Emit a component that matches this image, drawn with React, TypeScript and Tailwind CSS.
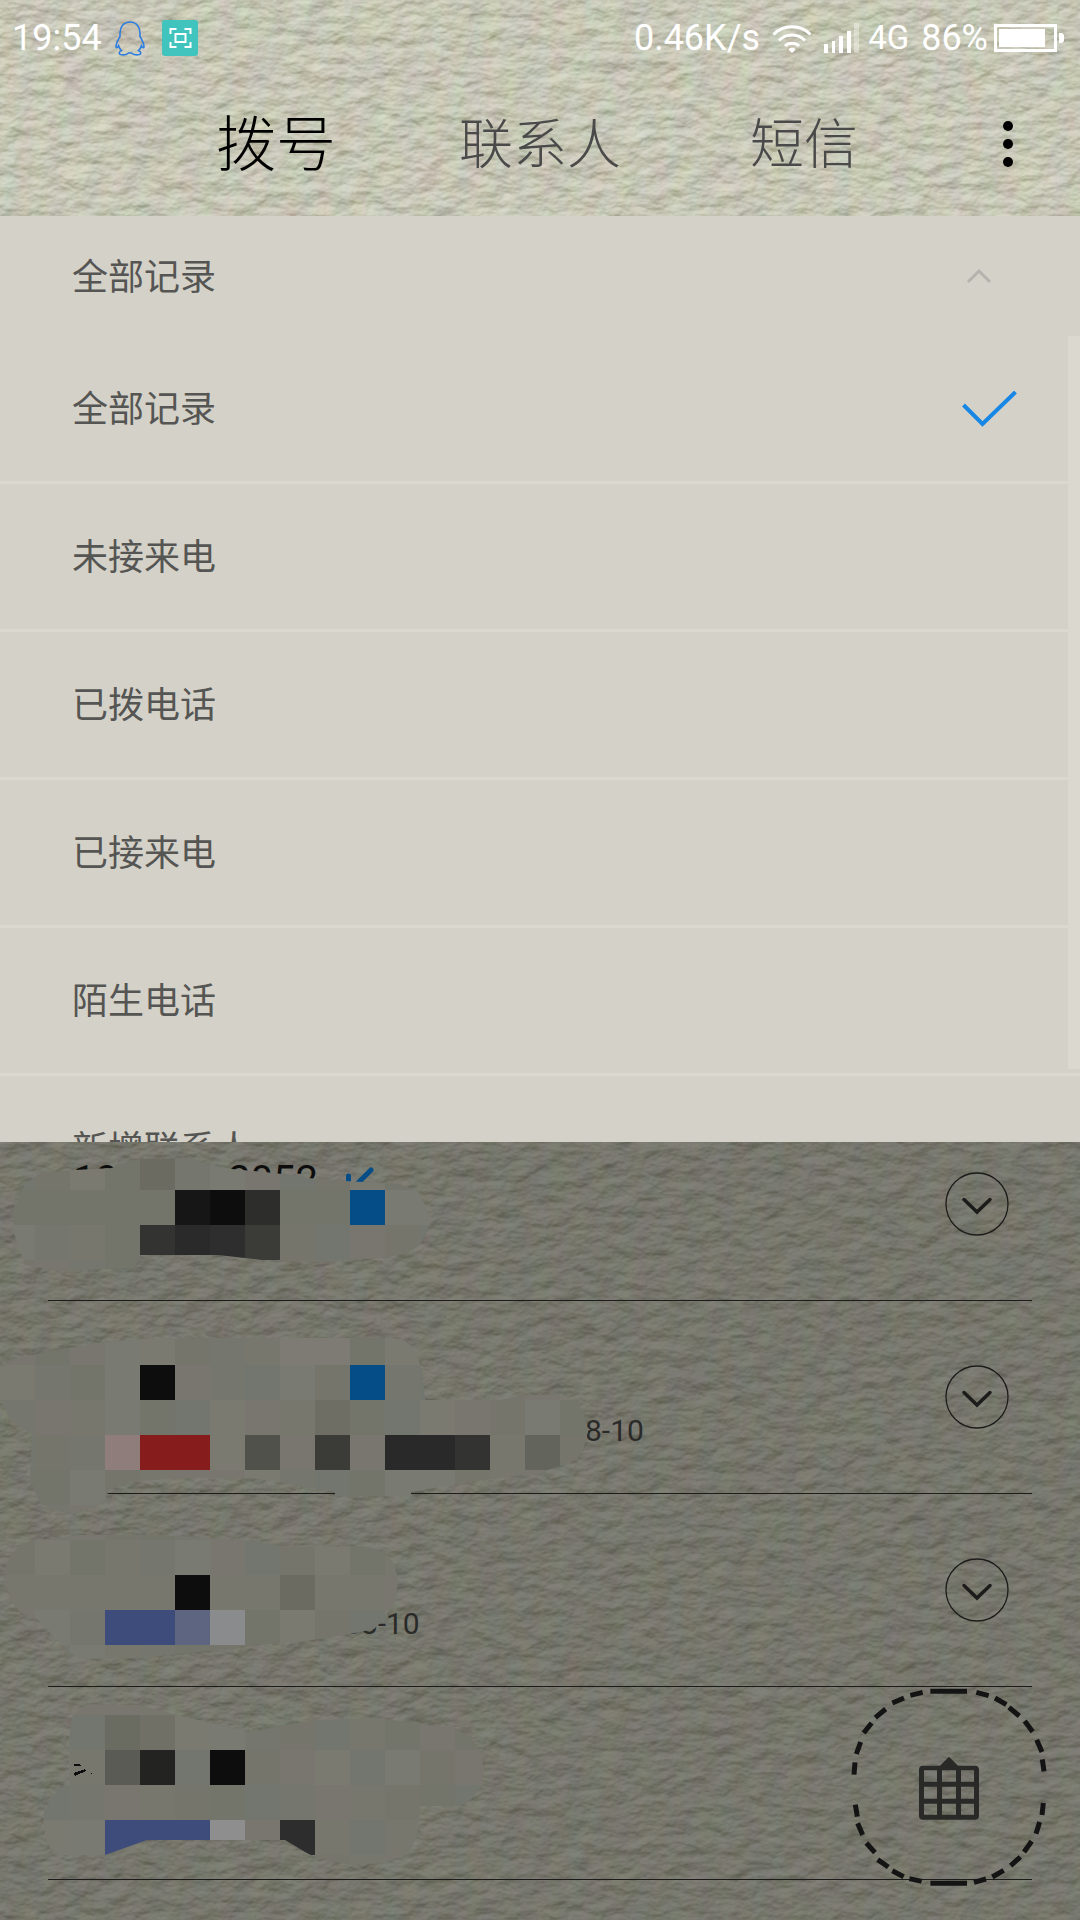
const filters = ["全部记录", "未接来电", "已拨电话", "已接来电", "陌生电话", "新增联系人"]

const records = [
  { id: 1, number: "18", tail: "2052", date: "", pad: "pl-[73px]" },
  { id: 2, number: "", tail: "", date: "8-10", pad: "pl-[585px]" },
  { id: 3, number: "", tail: "", date: "08-10", pad: "pl-[344px]" },
  { id: 4, number: "", tail: "", date: "", pad: "pl-[73px]" },
]

const CELL = 35

const smudges = [
  "13,1210 25,1184 40,1173 75,1170 112,1168 116,1165 140,1159 190,1158 215,1166 232,1169 265,1172 290,1175 308,1178 345,1181 400,1184 418,1192 427,1208 430,1225 420,1245 405,1254 380,1258 320,1262 262,1260 218,1255 140,1255 135,1268 60,1271 25,1265 13,1230",
  "5,1365 20,1358 60,1349 105,1343 140,1339 210,1338 390,1338 405,1341 415,1350 422,1370 425,1400 500,1400 525,1395 560,1395 575,1401 583,1410 588,1432 583,1450 575,1460 540,1473 460,1483 411,1492 411,1496 335,1496 335,1492 290,1484 250,1478 180,1478 130,1482 109,1490 105,1500 95,1508 75,1513 55,1511 40,1503 30,1480 32,1435 10,1420 0,1400 0,1368",
  "5,1570 10,1556 18,1547 30,1541 80,1535 160,1535 240,1540 290,1547 360,1546 375,1549 385,1553 395,1566 398,1580 395,1602 383,1620 374,1629 350,1634 300,1642 240,1646 200,1652 140,1658 80,1659 68,1652 60,1643 38,1620 20,1612 10,1600",
  "69,1740 72,1717 80,1709 90,1705 140,1705 180,1716 250,1732 315,1720 380,1718 420,1724 455,1728 470,1737 480,1750 484,1770 480,1788 472,1799 460,1806 420,1806 418,1830 413,1846 405,1855 380,1863 350,1865 315,1857 305,1852 285,1840 147,1840 105,1855 60,1855 50,1848 45,1835 43,1815 50,1800 69,1780",
]

// [column, row, columns wide, colour]
const cells: [number, number, number, string][] = [
  [4, 33, 1, "#6b6b62"],
  [5, 34, 1, "#161616"],
  [6, 34, 1, "#0d0d0d"],
  [7, 34, 1, "#2d2d2b"],
  [10, 34, 1, "#044d87"],
  [4, 35, 1, "#333331"],
  [5, 35, 1, "#2a2a2a"],
  [6, 35, 1, "#2e2e2e"],
  [7, 35, 1, "#3b3b38"],
  [8, 38, 2, "#7d7b74"],
  [4, 39, 1, "#0d0d0d"],
  [10, 39, 1, "#044d87"],
  [9, 40, 1, "#6f6e64"],
  [3, 41, 1, "#8e7d7a"],
  [4, 41, 2, "#861d1c"],
  [7, 41, 1, "#50514b"],
  [9, 41, 1, "#3b3b38"],
  [11, 41, 2, "#292929"],
  [13, 41, 1, "#333331"],
  [15, 41, 1, "#63645c"],
  [5, 45, 1, "#0d0d0d"],
  [8, 45, 1, "#6b6b62"],
  [3, 46, 2, "#3e4c7c"],
  [5, 46, 1, "#5d6580"],
  [6, 46, 1, "#8a8b8c"],
  [3, 49, 1, "#6a6b61"],
  [4, 49, 1, "#707066"],
  [3, 50, 1, "#5a5b54"],
  [4, 50, 1, "#232321"],
  [6, 50, 1, "#0d0d0d"],
  [3, 52, 3, "#3e4c7c"],
  [6, 52, 1, "#8e8e8e"],
  [8, 52, 1, "#2d2d2d"],
]

const shades = ["#75766d", "#77776e", "#73746a", "#7a7a70", "#76756c", "#73766f", "#78766f", "#797b72"]

function Paper() {
  return (
    <svg className="absolute inset-0 h-full w-full" aria-hidden="true">
      <filter id="paper" x="0" y="0" width="100%" height="100%" colorInterpolationFilters="sRGB">
        <feTurbulence type="fractalNoise" baseFrequency="0.045 0.075" numOctaves="4" seed="8" result="noise" />
        <feDiffuseLighting in="noise" surfaceScale="3" diffuseConstant="1" lightingColor="#ffffff">
          <feDistantLight azimuth="255" elevation="52" />
        </feDiffuseLighting>
        <feColorMatrix
          type="matrix"
          values="0.32 0 0 0 0.525  0.32 0 0 0 0.525  0.35 0 0 0 0.435  0 0 0 0 1"
          result="relief"
        />
        <feTurbulence type="fractalNoise" baseFrequency="0.06 0.02" numOctaves="3" seed="3" />
        <feColorMatrix type="matrix" values="1 0 0 0 0  0 1 0 0 0  0 0 1 0 0  0 0 0 0 1" result="tint" />
        <feComposite in="relief" in2="tint" operator="arithmetic" k1="0" k2="1" k3="0.07" k4="-0.035" />
      </filter>
      <rect width="100%" height="100%" filter="url(#paper)" />
    </svg>
  )
}

function StatusBar() {
  return (
    <div className="flex h-[72px] items-center justify-between pt-1 pr-4 pl-3 text-[36px] leading-[40px] text-white">
      <div className="flex items-center">
        <span>19:54</span>
        <svg className="ml-3 h-9 w-8" viewBox="0 0 32 36" fill="none" stroke="#2b7de0" strokeWidth="1.6" aria-hidden="true">
          <path d="M16 2C9.500 2 6 7 6 13v3.500C4 20 2.200 23 2 26.500c0 1.700 1.200 2 2.600-.8C5.200 28 6.500 29.500 7.500 30.500 5 31.500 4.500 34 6.500 34.500c3 .6 6.500.2 8-1.500h3c1.500 1.700 5 2.100 8 1.500 2-.5 1.500-3-1-4 1-1 2.300-2.500 2.900-4.800 1.400 2.800 2.600 2.500 2.600.8-.2-3.500-2-6.500-4-10V13C26 7 22.500 2 16 2z" />
        </svg>
        <svg className="ml-4 h-9 w-9" viewBox="0 0 36 36" fill="none" stroke="#fff" strokeWidth="2" aria-hidden="true">
          <rect width="36" height="36" rx="3" fill="#40c4bd" stroke="none" />
          <path d="M8.500 14V9h6M22.500 9h6v5M28.500 22v5h-6M14.500 27h-6v-5" />
          <rect x="13.500" y="14" width="10" height="8" />
        </svg>
      </div>
      <div className="flex items-center">
        <span>0.46K/s</span>
        <svg className="ml-3 h-8 w-10" viewBox="0 0 40 32" fill="none" stroke="#fff" strokeWidth="3" aria-hidden="true">
          <path d="M1.500 12.500a26 26 0 0 1 37 0M7 18.500a18 18 0 0 1 26 0M13 24a10 10 0 0 1 14 0" />
          <path d="M20 25.500a4 3.500 0 0 1 3.500 2L20 31l-3.500-3.500a4 3.500 0 0 1 3.500-2z" fill="#fff" stroke="none" />
        </svg>
        <svg className="ml-3 h-8 w-9" viewBox="0 0 36 32" fill="#fff" aria-hidden="true">
          <path d="M0 22h4v9H0zM8 19h3v12H8zM15 14h4v17h-4zM23 9h4v22h-4z" />
          <path d="M30 1h5v30h-5z" opacity=".35" />
        </svg>
        <span className="ml-2 text-[33px]">4G</span>
        <span className="ml-3">86%</span>
        <svg className="ml-1.5 h-7 w-[70px]" viewBox="0 0 70 28" aria-hidden="true">
          <rect x="1.500" y="1.500" width="60" height="25" fill="none" stroke="#fff" strokeWidth="3" />
          <path d="M5 5h46v18H5zM65 9h3l2 2v6l-2 2h-3z" fill="#fff" />
        </svg>
      </div>
    </div>
  )
}

function Tabs() {
  return (
    <nav className="flex h-36 items-center pl-36 font-light text-[#4a4a4a]">
      <a href="#dial" className="flex-1 pt-1 text-center text-[60px] leading-[80px] text-black">
        拨号
      </a>
      <a href="#contacts" className="flex-1 pt-1 text-center text-[54px] leading-[80px]">
        联系人
      </a>
      <a href="#messages" className="flex-1 pt-1 text-center text-[54px] leading-[80px]">
        短信
      </a>
      <button type="button" aria-label="更多" className="flex w-36 justify-center">
        <svg className="h-12 w-3" viewBox="0 0 12 48" aria-hidden="true">
          <circle cx="6" cy="6" r="5" />
          <circle cx="6" cy="24" r="5" />
          <circle cx="6" cy="42" r="5" />
        </svg>
      </button>
    </nav>
  )
}

function FilterPanel() {
  return (
    <section className="relative h-[926px] overflow-hidden bg-[#d4d1c8] text-[36px] leading-[48px] text-[#555553]">
      <button type="button" className="flex h-[120px] w-full items-center justify-between pr-[88px] pl-[72px]">
        <span className="pt-1">全部记录</span>
        <svg className="h-4 w-[26px]" viewBox="0 0 26 16" fill="none" stroke="#b5b3ae" strokeWidth="3" aria-hidden="true">
          <path d="M2 14 13 3l11 11" />
        </svg>
      </button>
      <ul>
        {filters.map((name, i) => (
          <li key={name} className="border-b-[3px] border-[#dbd8d0]">
            <button type="button" className="flex h-[145px] w-full items-center justify-between pr-[63px] pl-[72px]">
              <span className="pt-0.5">{name}</span>
              {i === 0 && (
                <svg className="h-9 w-[55px]" viewBox="0 0 55 36" fill="none" stroke="#1787e6" strokeWidth="4" aria-hidden="true">
                  <path d="M1.500 14 20.500 33 53.500 1" />
                </svg>
              )}
            </button>
          </li>
        ))}
      </ul>
      <div className="absolute top-[120px] right-0 h-[733px] w-3 bg-[#dbd8d0]" />
    </section>
  )
}

function Smudges() {
  return (
    <svg
      className="pointer-events-none absolute top-0 left-0 h-[778px] w-[1080px]"
      viewBox="0 1142 1080 778"
      shapeRendering="crispEdges"
      aria-hidden="true"
    >
      <clipPath id="smudge">
        {smudges.map((points) => (
          <polygon key={points} points={points} />
        ))}
      </clipPath>
      <g clipPath="url(#smudge)">
        {Array.from({ length: 22 * 18 }, (_, i) => {
          const col = i % 18
          const row = 32 + Math.floor(i / 18)
          const shade = shades[(col * 7 + row * 5 + ((col * row) % 11)) % shades.length]
          return <rect key={i} x={col * CELL} y={row * CELL} width={CELL} height={CELL} fill={shade} />
        })}
        {cells.map(([col, row, span, fill]) => (
          <rect key={`${col}-${row}`} x={col * CELL} y={row * CELL} width={span * CELL} height={CELL} fill={fill} />
        ))}
      </g>
      <path d="M74 1764h5l2 2h-7zM74 1773l11-4 1 2-11 5zM91 1773h1v1h-1z" fill="#0d0d0d" />
    </svg>
  )
}

function Records() {
  return (
    <section className="relative flex-1">
      <div className="absolute inset-0 bg-black/40" />
      <ul className="relative -mt-[34px]">
        {records.map((r) => (
          <li key={r.id} className="relative h-[193px]">
            <div className="flex h-full items-start justify-between pr-[71px]">
              <div className={`${r.pad} pt-[53px]`}>
                <p className="flex h-10 items-center text-[40px] leading-[40px] text-[#0d0d0d]">
                  <span className="w-[155px]">{r.number}</span>
                  <span>{r.tail}</span>
                  {r.tail && (
                    <svg className="ml-7 h-7 w-7" viewBox="0 0 28 28" fill="none" stroke="#044d87" strokeWidth="5" strokeLinecap="round" aria-hidden="true">
                      <path d="M25 3 3 25M2.500 9v16H18" />
                    </svg>
                  )}
                </p>
                <p className="pt-4 text-[30px] leading-[42px] text-[#2a2a29]">{r.date}</p>
              </div>
              {r.id < 4 && (
                <button type="button" aria-label="详情" className="mt-16">
                  <svg className="h-16 w-16" viewBox="0 0 64 64" fill="none" stroke="#1c1c1b" aria-hidden="true">
                    <circle cx="32" cy="32" r="31" strokeWidth="1.300" />
                    <path d="M19 27.500 32 40l13-12.500" strokeWidth="3.500" strokeLinecap="round" />
                  </svg>
                </button>
              )}
            </div>
            <div className="absolute right-12 bottom-0 left-12 h-px bg-[#1c1c1b]" />
          </li>
        ))}
      </ul>
      <Smudges />
      <button type="button" aria-label="拨号盘" className="absolute right-[31px] bottom-[33px]">
        <svg className="h-[200px] w-[200px]" viewBox="87 82 600 600" aria-hidden="true">
          <path
            fill="none"
            stroke="#141414"
            strokeWidth="15"
            d="M331 95H441M469 98L506 108M525 115L559 135M567 143L598 169M614 184L638 216M650 240L666 277M667 299L672 335M670 430L666 466M659 487L648 522M635 545L612 577M601 592L572 618M551 632L517 652M498 658L462 668M441 671H331M305 665L268 657M251 651L217 633M205 622L173 600M165 579L139 550M128 526L113 491M112 471L106 435M102 345L105 308M109 283L122 247M131 220L155 190M166 174L197 148M217 130L252 115M271 107L308 98"
          />
          <path
            fill="#292928"
            fillRule="evenodd"
            d="M309 318H360L387 291L414 318H465Q477 318 477 330V468Q477 480 465 480H309Q297 480 297 468V330Q297 318 309 318ZM312 332V366H351V332ZM366 332V366H408V332ZM423 332V366H462V332ZM312 381V417H351V381ZM366 381V417H408V381ZM423 381V417H462V381ZM312 432V465H351V432ZM366 432V465H408V432ZM423 432V465H462V432Z"
          />
        </svg>
      </button>
    </section>
  )
}

export default function App() {
  return (
    <div className="relative flex min-h-screen flex-col overflow-hidden bg-[#c8c7b5] font-[Roboto,'Noto_Sans_CJK_SC',sans-serif]">
      <Paper />
      <header className="relative">
        <StatusBar />
        <Tabs />
      </header>
      <FilterPanel />
      <Records />
    </div>
  )
}
